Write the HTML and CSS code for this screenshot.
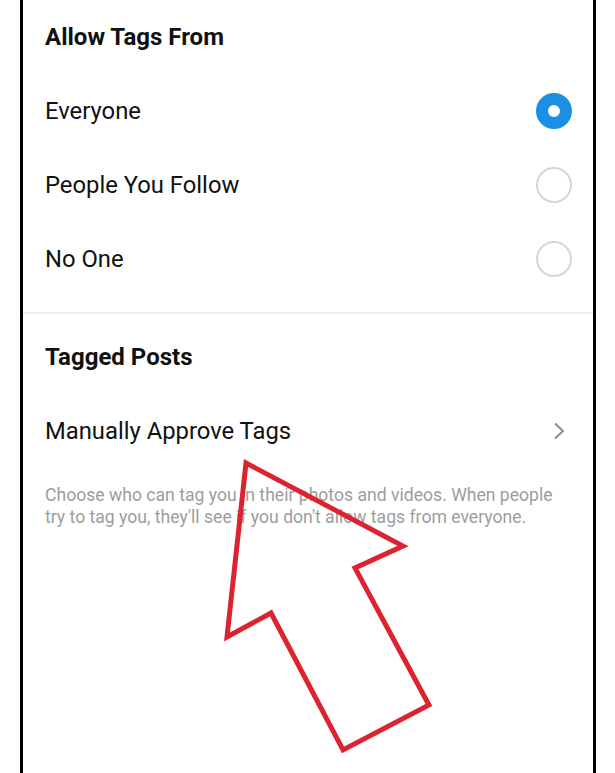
FILE: index.html
```html
<!DOCTYPE html>
<html lang="en">
<head>
<meta charset="utf-8">
<title>Tags</title>
<link rel="stylesheet" href="styles.css">
</head>
<body>
<div class="phone">
  <section class="group">
    <h2 class="group-title">Allow Tags From</h2>
    <div class="row">
      <span class="label">Everyone</span>
      <span class="radio radio-on"></span>
    </div>
    <div class="row">
      <span class="label">People You Follow</span>
      <span class="radio"></span>
    </div>
    <div class="row">
      <span class="label">No One</span>
      <span class="radio"></span>
    </div>
  </section>
  <hr class="divider">
  <section class="group">
    <h2 class="group-title">Tagged Posts</h2>
    <div class="row">
      <span class="label">Manually Approve Tags</span>
      <svg class="chevron" viewBox="0 0 12 18" width="12" height="18"><path d="M2 1.5 L10 9 L2 16.5" fill="none" stroke="#8e8e8e" stroke-width="2"/></svg>
    </div>
    <p class="note">Choose who can tag you in their photos and videos. When people try to tag you, they'll see if you don't allow tags from everyone.</p>
  </section>
  <svg class="pointer" viewBox="0 0 615 773" width="615" height="773">
    <polygon points="246,463 403,546 355,568 429,705 343,750 271,613 227,637" fill="none" stroke="#dc2430" stroke-width="5" stroke-linejoin="miter"/>
  </svg>
</div>
</body>
</html>
```

FILE: styles.css
```css
* { box-sizing: border-box; }

html, body {
  margin: 0;
  height: 100%;
  background: #fff;
}

body {
  font-family: Roboto, "Noto Sans", sans-serif;
  color: #111;
}

.phone {
  margin-left: 20px;
  width: 576px;
  min-height: 773px;
  border-left: 3px solid #000;
  border-right: 3px solid #000;
  padding: 0 21px 0 22px;
}

.group {
  display: flex;
  flex-direction: column;
}

.group-title {
  margin: 0;
  height: 74px;
  display: flex;
  align-items: center;
  font-size: 24px;
  font-weight: 700;
}

.row {
  height: 74px;
  display: flex;
  align-items: center;
  justify-content: space-between;
}

.label {
  font-size: 23.8px;
  font-weight: 400;
}

.radio {
  width: 36px;
  height: 36px;
  border-radius: 50%;
  border: 2px solid #d6d6d6;
}

.radio-on {
  border: 12px solid #1b8fe3;
  background: #fff;
}

.chevron {
  margin-right: 7px;
}

.divider {
  margin: 16px -21px 6px -22px;
  border: 0;
  border-top: 2px solid #ececec;
}

.note {
  margin: 16px 0 0;
  font-size: 17.6px;
  line-height: 22px;
  color: #9d9d9d;
}

.pointer {
  position: absolute;
  left: 0;
  top: 0;
  pointer-events: none;
}
```
